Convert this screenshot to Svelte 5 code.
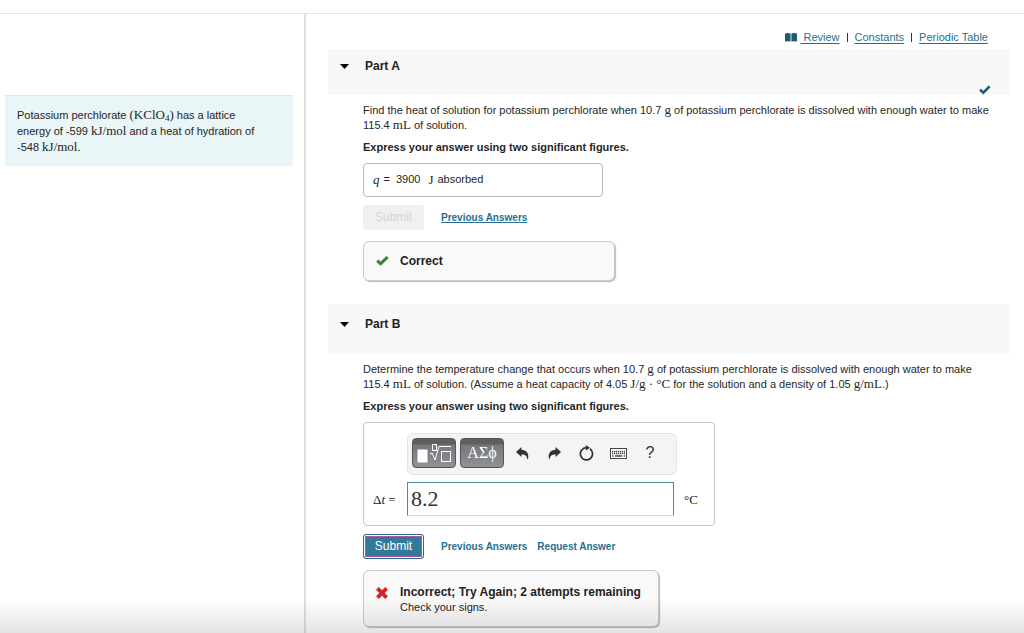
<script lang="ts">
	let answerA = $state("3900");
	let answerB = $state("8.2");
	let openA = $state(true);
	let openB = $state(true);
</script>

<div class="page">
	<div class="topbar"></div>
	<div class="columns">
		<aside>
			<p class="intro">
				Potassium perchlorate <span class="math">(KClO<sub>4</sub>)</span> has a lattice energy of -599
				<span class="math">kJ/mol</span> and a heat of hydration of -548 <span class="math">kJ/mol</span>.
			</p>
		</aside>

		<main>
			<nav>
				<a href="#review">
					<svg class="book" viewBox="0 0 12 9" width="12" height="9" aria-hidden="true">
						<path d="M0 .5 Q3 -.3 5.6 .5 V8.6 Q3 7.9 0 8.6Z M6.4 .5 Q9 -.3 12 .5 V8.6 Q9 7.9 6.4 8.6Z" />
					</svg><span>&nbsp;Review</span>
				</a>
				<i></i>
				<a href="#constants"><span>Constants</span></a>
				<i></i>
				<a href="#periodic"><span>Periodic Table</span></a>
			</nav>

			<section>
				<header class="scored">
					<button class="toggle" onclick={() => (openA = !openA)} aria-expanded={openA}>
						<svg viewBox="0 0 9 5" width="9" height="5" aria-hidden="true"><path d="M0 0H9L4.5 5Z" /></svg>
						<span>Part A</span>
					</button>
					<svg class="done" viewBox="0 0 12 10" width="12" height="10" aria-hidden="true">
						<path d="M1 4.7L4.3 7.7L10.6 1.3" />
					</svg>
				</header>
				{#if openA}
					<div class="body">
						<p>
							Find the heat of solution for potassium perchlorate when 10.7 <span class="math">g</span> of potassium
							perchlorate is dissolved with enough water to make 115.4 <span class="math">mL</span> of solution.
						</p>
						<p class="directions">Express your answer using two significant figures.</p>
						<div class="result">
							<em>q</em> = <output>{answerA}</output> <span class="math">J</span> absorbed
						</div>
						<div class="actions">
							<button class="submit" disabled>Submit</button>
							<a class="underlined" href="#previous-a">Previous Answers</a>
						</div>
						<div class="feedback correct">
							<svg viewBox="0 0 13 10" width="13" height="10" aria-hidden="true">
								<path d="M1.2 4.7L4.6 7.7L11.6 1.2" />
							</svg>
							<strong>Correct</strong>
						</div>
					</div>
				{/if}
			</section>

			<section>
				<header>
					<button class="toggle" onclick={() => (openB = !openB)} aria-expanded={openB}>
						<svg viewBox="0 0 9 5" width="9" height="5" aria-hidden="true"><path d="M0 0H9L4.5 5Z" /></svg>
						<span>Part B</span>
					</button>
				</header>
				{#if openB}
					<div class="body">
						<p>
							Determine the temperature change that occurs when 10.7 <span class="math">g</span> of potassium
							perchlorate is dissolved with enough water to make 115.4 <span class="math">mL</span> of solution.
							(Assume a heat capacity of 4.05 <span class="math">J/g · °C</span> for the solution and a density of
							1.05 <span class="math">g/mL</span>.)
						</p>
						<p class="directions">Express your answer using two significant figures.</p>
						<div class="entry">
							<div class="toolbar">
								<button class="dark" aria-label="Templates">
									<svg viewBox="0 0 34 20" width="34" height="20" aria-hidden="true">
										<rect x="1" y="7" width="9" height="12" fill="#fff" />
										<rect x="15.5" y="1.5" width="4" height="6" />
										<path d="M13 11L15 10L18 17L22 3.5H34" />
										<rect x="24.5" y="8.5" width="9" height="10" />
									</svg>
								</button>
								<button class="dark" aria-label="Symbols">ΑΣϕ</button>
								<button class="tool" aria-label="Undo">
									<svg viewBox="0 0 13 13" width="13" height="13">
										<path d="M5.5 0V2.8C9.5 3 13 5.2 12.2 11.2L11.2 12.5C11.2 9.2 9.5 7.3 5.5 7.4V10L0 5Z" />
									</svg>
								</button>
								<button class="tool" aria-label="Redo">
									<svg viewBox="0 0 13 13" width="13" height="13">
										<path d="M7.5 0V2.8C3.5 3 0 5.2 .8 11.2L1.8 12.5C1.8 9.2 3.5 7.3 7.5 7.4V10L13 5Z" />
									</svg>
								</button>
								<button class="tool" aria-label="Reset">
									<svg viewBox="0 0 15 16" width="15" height="16">
										<path d="M11 3.8A6.1 6.1 0 1 1 7.5 2.7" fill="none" stroke="#333" stroke-width="1.8" />
										<path d="M6.8 0L11 2.8L6.8 5.6Z" />
									</svg>
								</button>
								<button class="tool" aria-label="Keyboard shortcuts">
									<svg viewBox="0 0 17 11" width="17" height="11">
										<rect x=".5" y=".5" width="16" height="10" fill="#fff" stroke="#444" />
										<path
											d="M2 3.5H15M2 5.5H15"
											stroke="#444"
											stroke-width="1.3"
											stroke-dasharray="1.3 .7"
										/>
										<path d="M2 8H3.5M5 8H12M13.5 8H15" stroke="#444" stroke-width="1.3" />
									</svg>
								</button>
								<button class="tool help" aria-label="Help">?</button>
							</div>
							<label class="math" for="delta-t">Δ<em>t</em> =</label>
							<input id="delta-t" type="text" bind:value={answerB} />
							<span class="math unit">°C</span>
						</div>
						<div class="actions">
							<button class="submit active">Submit</button>
							<a href="#previous-b">Previous Answers</a>
							<a href="#request">Request Answer</a>
						</div>
						<div class="feedback incorrect">
							<svg viewBox="0 0 12 12" width="12" height="12" aria-hidden="true">
								<path d="M1.4 1.4L10.6 10.6M10.6 1.4L1.4 10.6" />
							</svg>
							<div>
								<strong>Incorrect; Try Again; 2 attempts remaining</strong>
								<p>Check your signs.</p>
							</div>
						</div>
					</div>
				{/if}
			</section>
		</main>
	</div>
	<div class="fade"></div>
</div>

<style>
	:global(body) {
		background: #fff;
	}

	.page {
		display: flex;
		flex-direction: column;
		min-height: 100vh;
		font: 11px/15px "Liberation Sans", Arial, sans-serif;
		color: #262626;
	}

	.page :is(p, em, output) {
		margin: 0;
	}

	button {
		font-family: inherit;
		cursor: pointer;
	}

	.topbar {
		height: 13px;
		border-bottom: 1px solid #e2e4e6;
	}

	.columns {
		flex: 1;
		display: flex;
	}

	aside {
		flex: 0 0 288px;
		padding: 81px 11px 0 5px;
		border-right: 2px solid #d8e0ea;
	}

	.page .intro {
		padding: 11px 28px 11px 12px;
		border-top: 1px solid #dde5e8;
		background: #e9f5f7;
		line-height: 16px;
	}

	.math,
	em {
		font-family: "Liberation Serif", "Times New Roman", serif;
		font-size: 13px;
		line-height: 1;
	}

	sub {
		font-size: 9px;
		line-height: 0;
		vertical-align: -2px;
	}

	main {
		flex: 1;
		min-width: 0;
		padding: 16px 15px 0 22px;
	}

	nav {
		display: flex;
		justify-content: flex-end;
		align-items: center;
		padding: 0 21px 4px 0;
	}

	nav a {
		display: flex;
		align-items: center;
		color: #25708f;
		text-decoration: none;
	}

	nav a span {
		text-decoration: underline;
		text-underline-offset: 2px;
	}

	nav i {
		width: 1px;
		height: 9px;
		margin: 0 7px;
		background: #333;
	}

	.book {
		margin-right: 3px;
		fill: #215b73;
	}

	header {
		display: flex;
		justify-content: space-between;
		align-items: flex-start;
		box-sizing: border-box;
		min-height: 50px;
		padding: 12px 18px 0 12px;
		background: #f8f8f8;
	}

	header.scored {
		min-height: 46px;
		padding-top: 9px;
	}

	.toggle {
		display: flex;
		align-items: center;
		gap: 16px;
		padding: 0;
		border: 0;
		background: none;
		font-size: 12px;
		font-weight: bold;
		line-height: 16px;
		color: #222;
	}

	.done {
		align-self: flex-end;
		fill: none;
		stroke: #215b73;
		stroke-width: 2.6;
	}

	.body {
		padding: 8px 0 23px 35px;
	}

	.body > p {
		margin-right: 12px;
	}

	.body .directions {
		margin: 7px 0 8px;
		font-weight: bold;
	}

	.result {
		display: flex;
		align-items: center;
		gap: 4px;
		box-sizing: border-box;
		width: 240px;
		height: 34px;
		padding: 0 9px 2px;
		border: 1px solid #b9b9b9;
		border-radius: 4px;
	}

	.result output {
		margin: 0 4px 0 2px;
	}

	.actions {
		display: flex;
		align-items: center;
		gap: 10px;
		margin: 8px 0 11px;
	}

	.actions a {
		color: #25708f;
		font-size: 10px;
		font-weight: bold;
		text-decoration: none;
	}

	.actions .underlined {
		text-decoration: underline;
	}

	.submit {
		width: 61px;
		height: 25px;
		margin-right: 7px;
		padding: 0 0 1px;
		border: 0;
		border-radius: 2px;
		background: #f0f0f0;
		font-size: 12px;
		color: #d5d5d5;
	}

	.submit.active {
		border: 1px solid #2b6c88;
		border-radius: 3px;
		background: #32799a;
		box-shadow:
			inset 0 0 0 1px #fff,
			inset 0 0 0 2px #b0569f;
		color: #fff;
	}

	.feedback {
		display: flex;
		align-items: center;
		box-sizing: border-box;
		gap: 11px;
		width: 252px;
		min-height: 40px;
		padding: 0 12px;
		border: 1px solid #c9c9c9;
		border-radius: 6px;
		background: #f9f9f9;
		box-shadow: 1px 1px 1px #bbb;
	}

	.feedback svg {
		flex: none;
		fill: none;
		stroke: #35843d;
		stroke-width: 3;
	}

	.feedback strong {
		font-size: 12px;
		color: #222;
	}

	.feedback.incorrect {
		gap: 12px;
		width: 296px;
		min-height: 57px;
		padding-top: 2px;
	}

	.incorrect svg {
		margin-bottom: 14px;
		stroke: #d2232a;
		stroke-width: 3.8;
	}

	.entry {
		display: grid;
		grid-template-columns: 34px 267px auto;
		row-gap: 7px;
		align-items: center;
		box-sizing: border-box;
		width: 352px;
		padding: 10px 9px 9px;
		border: 1px solid #c6c6c6;
		border-radius: 4px;
		white-space: nowrap;
	}

	.toolbar {
		grid-column: 2 / 4;
		justify-self: start;
		display: flex;
		align-items: center;
		gap: 4px;
		box-sizing: border-box;
		width: 270px;
		height: 42px;
		padding: 0 4px 2px;
		border: 1px solid #e2e2e2;
		border-radius: 6px;
		background: #f4f4f4;
	}

	.dark {
		display: flex;
		align-items: center;
		justify-content: center;
		flex: none;
		width: 44px;
		height: 30px;
		padding: 0;
		border: 1px solid #55555a;
		border-radius: 4px;
		background: linear-gradient(#5f5f61 5px, #77777d 6px, #909096);
		font: 16px "Liberation Serif", serif;
		color: #fff;
	}

	.dark svg {
		fill: none;
		stroke: #fff;
	}

	.tool {
		display: flex;
		align-items: center;
		justify-content: center;
		width: 28px;
		height: 28px;
		padding: 0;
		border: 0;
		background: none;
		color: #333;
	}

	.tool svg {
		flex: none;
		fill: #333;
	}

	.help {
		font-size: 16px;
	}

	input {
		box-sizing: border-box;
		width: 100%;
		height: 34px;
		padding: 0 3px;
		border: 1px solid #4a8da6;
		border-bottom-color: #c5dfe8;
		font: 22px "Liberation Serif", serif;
		color: #333;
		outline: none;
	}

	.unit {
		margin-left: 10px;
	}

	.fade {
		position: fixed;
		right: 0;
		bottom: 0;
		left: 0;
		height: 34px;
		background: linear-gradient(transparent, rgba(0, 0, 0, 0.11));
		pointer-events: none;
	}
</style>
